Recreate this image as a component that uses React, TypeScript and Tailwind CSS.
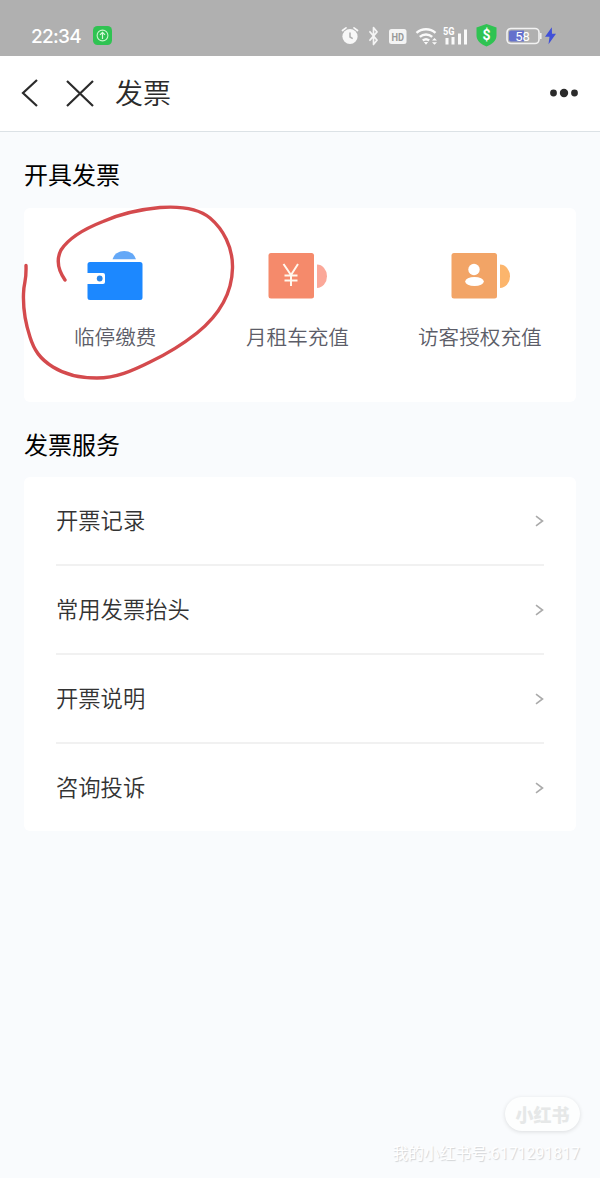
import { Bluetooth } from "lucide-react";

const services = ["开票记录", "常用发票抬头", "开票说明", "咨询投诉"];

function WalletIcon() {
  return (
    <svg width="56" height="52" viewBox="0 0 56 52">
      <path d="M25.500 9.300a12 10.500 0 0 1 23.500 0z" fill="#64a8f7" />
      <path
        d="M3 12h50a2.5 2.5 0 0 1 2.5 2.5v33a2.5 2.5 0 0 1-2.5 2.5H3a2.500 2.500 0 0 1-2.500-2.500V34H16a2 2 0 0 0 2-2v-7a2 2 0 0 0-2-2H.5v-8.500A2.500 2.500 0 0 1 3 12z"
        fill="#1c88ff"
      />
      <circle cx="12.700" cy="28.500" r="2.900" fill="#2b86e8" />
    </svg>
  );
}

function RechargeIcon() {
  return (
    <svg width="60" height="52" viewBox="0 0 60 52">
      <rect x="1.500" y="3" width="45.500" height="45.500" rx="2.5" fill="#f58a6b" />
      <path d="M50 14.500a10 11.700 0 0 1 0 23.400z" fill="#fba899" />
      <path
        d="M16.500 14l7.500 11L31 14M24 25V36M17.500 25.500h13M17.500 30.500h13"
        fill="none"
        stroke="#fff8ee"
        strokeWidth="2"
      />
    </svg>
  );
}

function VisitorIcon() {
  return (
    <svg width="60" height="52" viewBox="0 0 60 52">
      <rect x="1.500" y="3" width="45.500" height="45.500" rx="2.5" fill="#f2a466" />
      <path d="M50 14.500a10 11.700 0 0 1 0 23.400z" fill="#fcb56c" />
      <circle cx="24" cy="19.500" r="5.700" fill="#fff" />
      <ellipse cx="24.500" cy="31.500" rx="9.300" ry="4.600" fill="#fff" />
    </svg>
  );
}

const actions = [
  { label: "临停缴费", icon: <WalletIcon /> },
  { label: "月租车充值", icon: <RechargeIcon /> },
  { label: "访客授权充值", icon: <VisitorIcon /> },
];

function StatusBar() {
  return (
    <div className="flex h-14 items-end justify-between bg-[#b0b0b0] pr-[43px] pb-2 pl-[31px] text-white">
      <div className="flex h-6 items-center gap-[11px]">
        <span className="w-[51px] pt-px font-[Inter,sans-serif] text-[19px] leading-6 font-medium tracking-[-0.7px] whitespace-nowrap">22:34</span>
        <svg className="mb-px" width="19" height="19" viewBox="0 0 19 19">
          <rect width="19" height="19" rx="4.500" fill="#2fc352" />
          <circle cx="9.500" cy="9.500" r="5.400" fill="none" stroke="#c8f5cc" strokeWidth="1.100" />
          <path d="M9.500 13V6.500M7 8.800l2.500-2.500L12 8.800" fill="none" stroke="#d8f8da" strokeWidth="1.200" />
        </svg>
      </div>

      <div className="flex h-6 items-center">
        {/* Alarm */}
        <svg className="mr-[6px] mb-px" width="18" height="19" viewBox="0 0 18 19">
          <circle cx="9" cy="10.500" r="7.600" fill="#f7f7f7" />
          <path d="M1.500 4.500l3.500-2.700M16.500 4.500L13 1.800" stroke="#f7f7f7" strokeWidth="1.700" strokeLinecap="round" />
          <path d="M9 6.500v4.500l2.700 1.600" fill="none" stroke="#b0b0b0" strokeWidth="1.500" />
        </svg>
        <Bluetooth className="mr-[7px] mb-px h-[20px] w-[17px]" strokeWidth={2.4} color="#f4f4f4" preserveAspectRatio="none" />
        <svg className="mr-[8px]" width="18" height="15" viewBox="0 0 18 15">
          <rect width="17.500" height="15" rx="2.500" fill="#f4f4f4" />
          <text x="8.800" y="11.500" textAnchor="middle" fontSize="11" fontWeight="700" fill="#999" fontFamily="Roboto, sans-serif" textLength="12.500" lengthAdjust="spacingAndGlyphs">HD</text>
        </svg>
        {/* Wi-Fi */}
        <svg className="mr-[4px] mb-px" width="24" height="20" viewBox="0 0 24 20">
          <path d="M1.500 6.800a14.300 14.300 0 0 1 19 0M4.800 10.900a9.300 9.300 0 0 1 12.400 0M7.800 14.500a5 5 0 0 1 6.400 0" fill="none" stroke="#fafafa" strokeWidth="2.400" />
          <path d="M8.800 16h4.400L11 18.700z" fill="#fafafa" />
          <path d="M17 14.500l2.500-2.500 2.500 2.500zM17 16.200h5l-2.500 2.500z" fill="#fafafa" />
        </svg>
        {/* Signal */}
        <svg className="mr-[7px] mb-px" width="26" height="20" viewBox="0 0 26 20">
          <text x="0" y="9" fontSize="10.500" fontWeight="700" fill="#fff" fontFamily="Roboto, sans-serif" textLength="11.500" lengthAdjust="spacingAndGlyphs">5G</text>
          <path d="M4 12v6.500M10 11v7.500M16.500 7.500v11M22.500 3.500v15" stroke="#fafafa" strokeWidth="3" />
        </svg>
        <svg className="mr-[9px]" width="21" height="24" viewBox="0 0 21 24">
          <path d="M10.500 0l10 3.500v8c0 5-4 8.500-10 11-6-2.500-10-6-10-11v-8z" fill="#2fc352" />
          <text x="10.500" y="16" textAnchor="middle" fontSize="14" fontWeight="700" fill="#fff" fontFamily="Roboto, sans-serif">$</text>
        </svg>
        <svg className="mr-[3px]" width="36" height="18" viewBox="0 0 36 18">
          <rect x="1" y="1.500" width="32" height="15" rx="4" fill="none" stroke="#f2f2f2" strokeWidth="1.600" />
          <path d="M5 3.500h13v11H5a2 2 0 0 1-2-2v-7a2 2 0 0 1 2-2z" fill="#6570cc" />
          <path d="M34.800 6v6" stroke="#f2f2f2" strokeWidth="1.500" />
          <text x="16.500" y="13.500" textAnchor="middle" fontSize="13" fill="#fff" fontFamily="Roboto, sans-serif">58</text>
        </svg>
        <svg width="12" height="18" viewBox="0 0 12 18">
          <path d="M6.800.2L0 9.700h4.500L3.500 17.200 11 6.700H7z" fill="#4050d8" />
        </svg>
      </div>
    </div>
  );
}

function Header() {
  return (
    <header className="flex h-[76px] items-center border-b border-[#dce2e6] bg-white px-[21px] pb-px text-[#2b2b2b]">
      <svg width="18" height="28" viewBox="0 0 18 28">
        <path d="M16 1L2 14l14 13" fill="none" stroke="currentColor" strokeWidth="2.200" />
      </svg>
      <svg className="ml-[27px]" width="28" height="28" viewBox="0 0 28 28">
        <path d="M1 2l26 25M27 2L1 27" fill="none" stroke="currentColor" strokeWidth="2.200" />
      </svg>
      <h1 className="mb-[2px] ml-[21px] text-[28px] leading-9 font-[350]">发票</h1>
      <svg className="ml-auto" width="30" height="10" viewBox="0 0 30 10">
        <circle cx="4.500" cy="5" r="3.400" fill="currentColor" />
        <circle cx="15" cy="5" r="4.200" fill="currentColor" />
        <circle cx="25.500" cy="5" r="3.400" fill="currentColor" />
      </svg>
    </header>
  );
}

export default function App() {
  return (
    <div className="flex h-[1178px] w-[600px] flex-col bg-[#f9fbfd] font-['Noto_Sans_CJK_SC',sans-serif]">
      <StatusBar />
      <Header />

      <main className="px-6 pt-[24px]">
        <h2 className="text-[24px] leading-9 text-black">开具发票</h2>
        <section className="relative mt-[16px] h-[194px] rounded-md bg-white">
          <div className="grid grid-cols-3 pt-[42px] pr-[5px]">
            {actions.map((action) => (
              <div key={action.label} className="flex flex-col items-center">
                {action.icon}
                <span className="mt-[18px] text-[20.600px] leading-8 font-[350] whitespace-nowrap text-[#5c5d68]">{action.label}</span>
              </div>
            ))}
          </div>

          {/* Hand-drawn mark around the first action */}
          <svg className="pointer-events-none absolute -top-2 -left-2" width="224" height="186" viewBox="16 200 224 186">
            <path
              d="M65 280C58 270 56 260 61 250C70 236 89 227 103 221.500C122 213 144 209 160 207.500C181 206 198 208 210 218C223 229 233 247 232.500 268C232 294 218 316 197 333C183 344 167 354 150 362C132 371 116 378 97 378C80 378 64 374 53 367C40 359 34 350 30 337C25 322 23 309 23.500 294C24 279 26.500 284 26 265.500"
              fill="none"
              stroke="#d44a4d"
              strokeWidth="3.400"
              strokeLinecap="round"
            />
          </svg>
        </section>

        <h2 className="mt-[24px] text-[24px] leading-9 text-black">发票服务</h2>
        <section className="mt-[15px] rounded-md bg-white px-8">
          {services.map((name) => (
            <div key={name} className="flex h-[89px] items-center justify-between border-b-2 border-[#f1f1f1] last:h-[87px] last:border-0">
              <span className="mb-[3px] text-[22.300px] leading-8 font-[350] text-[#333]">{name}</span>
              <svg width="10" height="12" viewBox="0 0 10 12">
                <path d="M2 1.200l6.500 4.800L2 10.800" fill="none" stroke="#aaa" strokeWidth="1.600" />
              </svg>
            </div>
          ))}
        </section>
      </main>

      <footer className="mt-auto flex flex-col items-end pr-5 pb-[12px]">
        <div className="flex h-[34px] w-[75px] items-center justify-center rounded-full bg-[#fdfefe] text-[18px] font-black text-[#e6e8e8] shadow-[0_1px_4px_rgba(0,0,0,0.12)]">
          小红书
        </div>
        <p className="mt-[11px] font-[Roboto,'Noto_Sans_CJK_SC',sans-serif] text-[15.600px] leading-6 tracking-[0.15px] text-white [text-shadow:1px_1px_1px_#d2d4d6]">
          我的小红书号:6171291817
        </p>
      </footer>
    </div>
  );
}
